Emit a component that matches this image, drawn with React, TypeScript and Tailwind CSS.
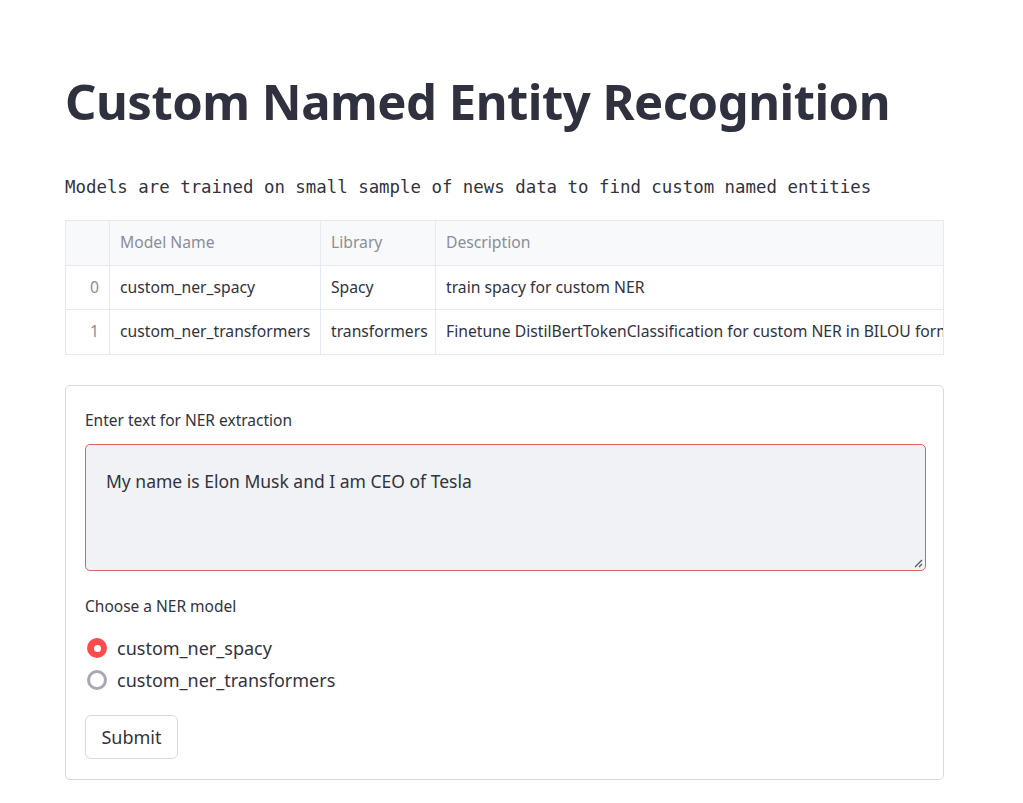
import React from "react";

const sans = { fontFamily: '"Noto Sans", "Open Sans", sans-serif' };

export default function App() {
  return (
    <div className="min-h-screen bg-white text-[#31333f]" style={sans}>
      <div className="ml-[65px] w-[879px] pt-[69px]">
        <h1 className="text-[49px] font-bold leading-[64px] tracking-[-0.5px] text-[#2f313e]">
          Custom Named Entity Recognition
        </h1>
        <p
          className="mt-[42px] text-[17.4px] leading-[24px] text-[#31333f] whitespace-nowrap"
          style={{ fontFamily: '"DejaVu Sans Mono", monospace' }}
        >
          Models are trained on small sample of news data to find custom named entities
        </p>
        <div className="mt-[21px] border border-[#e6e9ef] overflow-hidden">
          <div className="grid grid-cols-[44px_211px_115px_1fr] h-[45px] bg-[#f8f9fb] text-[#8b8e97] text-[15.7px] border-b border-[#e6e9ef]">
            <div className="border-r border-[#e6e9ef]" />
            <div className="border-r border-[#e6e9ef] px-[10px] flex items-center">Model Name</div>
            <div className="border-r border-[#e6e9ef] px-[10px] flex items-center">Library</div>
            <div className="px-[10px] flex items-center whitespace-nowrap">Description</div>
          </div>
          {[
            ["0", "custom_ner_spacy", "Spacy", "train spacy for custom NER"],
            [
              "1",
              "custom_ner_transformers",
              "transformers",
              "Finetune DistilBertTokenClassification for custom NER in BILOU format",
            ],
          ].map((r, i) => (
            <div
              key={i}
              className={`grid grid-cols-[44px_211px_115px_1fr] h-[44px] text-[15.7px] ${i === 0 ? "border-b border-[#e6e9ef]" : ""}`}
            >
              <div className="border-r border-[#e6e9ef] px-[10px] flex items-center justify-end text-[#8b8e97]">{r[0]}</div>
              <div className="border-r border-[#e6e9ef] px-[10px] flex items-center whitespace-nowrap">{r[1]}</div>
              <div className="border-r border-[#e6e9ef] px-[10px] flex items-center whitespace-nowrap">{r[2]}</div>
              <div className="px-[10px] flex items-center whitespace-nowrap overflow-hidden">{r[3]}</div>
            </div>
          ))}
        </div>
        <div className="mt-[30px] border border-[#d9dadd] rounded-[5px] pl-[19px] pr-[17px] pt-[20px] pb-[20px]">
          <div className="text-[15.5px] leading-[28px] text-[#31333f]">Enter text for NER extraction</div>
          <div className="mt-[10px] relative h-[127px] rounded-[5px] border border-[#dc6161] bg-[#f0f2f6]">
            <div className="pl-[20px] pt-[22px] text-[17.5px] leading-[28px] text-[#31333f]">
              My name is Elon Musk and I am CEO of Tesla
            </div>
            <svg className="absolute right-[2px] bottom-[2px]" width="10" height="10" viewBox="0 0 10 10">
              <path d="M9 2 L2 9 M9 6 L6 9" stroke="#555" strokeWidth="1.2" />
            </svg>
          </div>
          <div className="mt-[21px] text-[15.5px] leading-[28px]">Choose a NER model</div>
          <div className="mt-[16px] flex flex-col gap-[8px]">
            <label className="flex items-center gap-[10px] h-[24px]">
              <span className="ml-[2px] w-[20px] h-[20px] rounded-full bg-[#ff4b4b] flex items-center justify-center">
                <span className="w-[7px] h-[7px] rounded-full bg-white" />
              </span>
              <span className="text-[18px]">custom_ner_spacy</span>
            </label>
            <label className="flex items-center gap-[10px] h-[24px]">
              <span className="ml-[2px] w-[20px] h-[20px] rounded-full border-[3px] border-[#a6a9b1] bg-white" />
              <span className="text-[18px]">custom_ner_transformers</span>
            </label>
          </div>
          <button className="mt-[23px] h-[44px] w-[93px] rounded-[6px] border border-[#d9dadd] bg-white text-[18px] text-[#31333f]">
            Submit
          </button>
        </div>
      </div>
    </div>
  );
}
